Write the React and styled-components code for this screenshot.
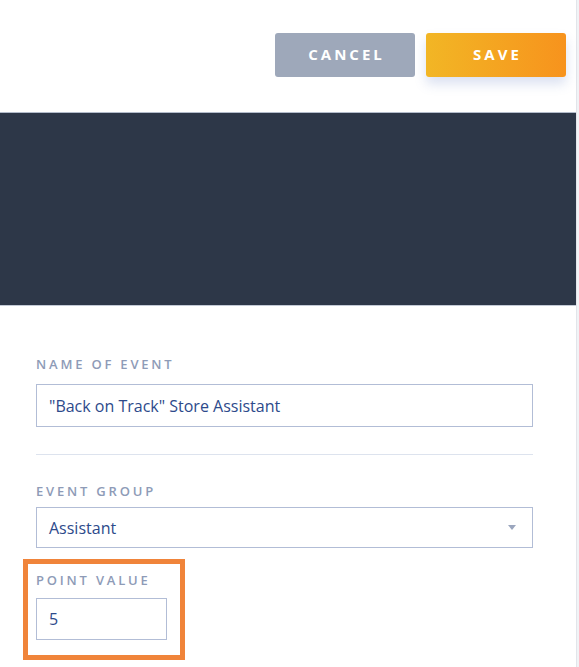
import React from 'react'
import styled, { createGlobalStyle } from 'styled-components'

const GlobalStyle = createGlobalStyle`
  html, body {
    margin: 0;
    padding: 0;
    background: #ffffff;
    font-family: 'Open Sans', 'Liberation Sans', sans-serif;
  }
`

const Page = styled.div`
  display: flex;
  width: 579px;
  height: 667px;
  overflow: hidden;
  background: #f1f3f6;
`

const Panel = styled.div`
  width: 576px;
  flex: none;
  background: #ffffff;
  border-right: 1px solid #e2e5ea;
  display: flex;
  flex-direction: column;
`

const Header = styled.div`
  height: 112px;
  display: flex;
  justify-content: flex-end;
  align-items: flex-start;
  gap: 11px;
  padding: 33px 10px 0 0;
  box-sizing: border-box;
`

const Button = styled.button`
  width: 140px;
  height: 44px;
  border: none;
  border-radius: 3px;
  padding: 0 0 2px 3px;
  font-family: 'Open Sans', 'Liberation Sans', sans-serif;
  font-weight: 700;
  font-size: 15px;
  letter-spacing: 3px;
  color: #ffffff;
  cursor: pointer;
  background: ${p => (p.$primary ? 'linear-gradient(90deg, #f2b625 0%, #f7931d 100%)' : '#9ea8ba')};
  box-shadow: ${p => (p.$primary ? '0 7px 12px rgba(90, 120, 190, 0.22)' : 'none')};
`

const Banner = styled.div`
  height: 192px;
  background: #2d3748;
  border-top: 1px solid #b3bccb;
  border-bottom: 1px solid #c3cad6;
`

const Form = styled.div`
  padding: 50px 43px 0 36px;
  display: flex;
  flex-direction: column;
`

const Label = styled.div`
  font-size: 13px;
  line-height: 16px;
  font-weight: 600;
  letter-spacing: 2.8px;
  color: #8e9bb7;
  margin-bottom: ${p => p.$gap || 12}px;
`

const Field = styled.input`
  box-sizing: border-box;
  width: ${p => p.$width || '100%'};
  height: ${p => p.$height || 43}px;
  border: 1px solid #b2bdd6;
  border-radius: 0;
  padding: 0 12px;
  font-family: 'Open Sans', 'Liberation Sans', sans-serif;
  font-size: 16px;
  color: #2d4a8b;
  background: #ffffff;
  outline: none;
`

const Divider = styled.div`
  height: 1px;
  background: #dde3ee;
  margin: 27px 0 28px;
`

const Select = styled.div`
  box-sizing: border-box;
  height: 41px;
  border: 1px solid #b2bdd6;
  padding: 0 16px 0 12px;
  display: flex;
  align-items: center;
  justify-content: space-between;
  font-size: 16px;
  color: #2d4a8b;
`

const Highlight = styled.div`
  align-self: flex-start;
  margin: 11px 0 0 -13px;
  border: 5px solid #f0843a;
  padding: 8px 13px 15px 8px;
`

export default function App() {
  return (
    <>
      <GlobalStyle />
      <Page>
        <Panel>
          <Header>
            <Button>CANCEL</Button>
            <Button $primary>SAVE</Button>
          </Header>
          <Banner />
          <Form>
            <Label>NAME OF EVENT</Label>
            <Field defaultValue={'"Back on Track" Store Assistant'} />
            <Divider />
            <Label $gap={8}>EVENT GROUP</Label>
            <Select>
              <span>Assistant</span>
              <svg width="8" height="5" viewBox="0 0 8 5">
                <path d="M0 0 L8 0 L4 5 Z" fill="#9ba6be" />
              </svg>
            </Select>
            <Highlight>
              <Label $gap={10}>POINT VALUE</Label>
              <Field $width="131px" $height={42} defaultValue="5" />
            </Highlight>
          </Form>
        </Panel>
      </Page>
    </>
  )
}
